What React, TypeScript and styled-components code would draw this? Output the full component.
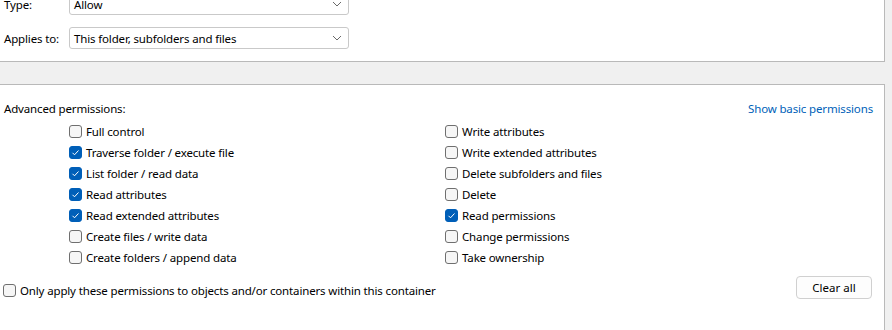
import React from 'react';
import styled, { createGlobalStyle } from 'styled-components';

const GlobalStyle = createGlobalStyle`
  *, *::before, *::after {
    box-sizing: border-box;
  }
  html, body {
    margin: 0;
    padding: 0;
    background: #f0f0f0;
  }
  body {
    font-family: 'Segoe UI', 'Noto Sans', sans-serif;
    font-size: 11.5px;
    letter-spacing: -0.15px;
    color: #000;
  }
`;

const Window = styled.div`
  width: 892px;
  height: 330px;
  overflow: hidden;
  background: #f0f0f0;
  display: flex;
  flex-direction: column;
  gap: 22px;
`;

const TopPanel = styled.section`
  width: 885px;
  background: #fff;
  border-right: 1px solid #b9b9b9;
  border-bottom: 1px solid #b9b9b9;
  padding: 0 0 12px 4px;
  display: flex;
  flex-direction: column;
  gap: 12px;
`;

const FieldRow = styled.div<{ $cut?: boolean }>`
  display: flex;
  align-items: center;
  height: 22px;
  margin-top: ${(p) => (p.$cut ? '-7px' : '0')};
`;

const FieldLabel = styled.label`
  width: 65px;
  flex: none;
`;

const Select = styled.div`
  width: 280px;
  height: 22px;
  border: 1px solid #c9c9c9;
  border-radius: 3px;
  background: #fff;
  display: flex;
  align-items: center;
  justify-content: space-between;
  padding: 0 6px 0 4px;
`;

const Chevron = () => (
  <svg width="10" height="6" viewBox="0 0 10 6">
    <path d="M1 1l4 4 4-4" fill="none" stroke="#6a6a6a" strokeWidth="1" />
  </svg>
);

const MainPanel = styled.section`
  flex: 1;
  width: 885px;
  background: #fff;
  border-top: 1px solid #b9b9b9;
  border-right: 1px solid #b9b9b9;
  padding: 13px 11px 0 4px;
  display: flex;
  flex-direction: column;
`;

const HeaderRow = styled.div`
  display: flex;
  justify-content: space-between;
  align-items: center;
  height: 20px;
`;

const Link = styled.a`
  color: #005fb8;
  text-decoration: none;
  cursor: pointer;
`;

const PermGrid = styled.div`
  display: grid;
  grid-template-columns: 376px 1fr;
  grid-auto-flow: column;
  grid-template-rows: repeat(7, 21px);
  padding-left: 65px;
  margin-top: 3px;
`;

const CheckLabel = styled.label`
  display: flex;
  align-items: center;
  gap: 4px;
  white-space: nowrap;
`;

const Box = styled.span<{ $on: boolean }>`
  width: 13px;
  height: 13px;
  flex: none;
  border-radius: 3px;
  border: 1px solid ${(p) => (p.$on ? '#005fb8' : '#6f6f6f')};
  background: ${(p) => (p.$on ? '#005fb8' : '#f6f6f6')};
  display: flex;
  align-items: center;
  justify-content: center;
`;

const Check = ({ on, children }: { on: boolean; children: React.ReactNode }) => (
  <CheckLabel>
    <Box $on={on}>
      {on && (
        <svg width="9" height="9" viewBox="0 0 9 9">
          <path d="M1.5 4.8l2 2 4-4.3" fill="none" stroke="#fff" strokeWidth="1" />
        </svg>
      )}
    </Box>
    {children}
  </CheckLabel>
);

const FooterRow = styled.div`
  display: flex;
  justify-content: space-between;
  align-items: flex-start;
  margin-top: 8px;
  margin-left: -1px;
  padding-right: 1px;
`;

const FooterCheck = styled.div`
  margin-top: 7px;
`;

const Button = styled.button`
  width: 76px;
  height: 23px;
  border: 1px solid #d0d0d0;
  border-radius: 4px;
  background: #fdfdfd;
  font: inherit;
  color: #000;
  padding: 0;
`;

const left: [string, boolean][] = [
  ['Full control', false],
  ['Traverse folder / execute file', true],
  ['List folder / read data', true],
  ['Read attributes', true],
  ['Read extended attributes', true],
  ['Create files / write data', false],
  ['Create folders / append data', false],
];

const right: [string, boolean][] = [
  ['Write attributes', false],
  ['Write extended attributes', false],
  ['Delete subfolders and files', false],
  ['Delete', false],
  ['Read permissions', true],
  ['Change permissions', false],
  ['Take ownership', false],
];

export default function App() {
  return (
    <>
      <GlobalStyle />
      <Window>
        <TopPanel>
          <FieldRow $cut>
            <FieldLabel>Type:</FieldLabel>
            <Select>
              <span>Allow</span>
              <Chevron />
            </Select>
          </FieldRow>
          <FieldRow>
            <FieldLabel>Applies to:</FieldLabel>
            <Select>
              <span>This folder, subfolders and files</span>
              <Chevron />
            </Select>
          </FieldRow>
        </TopPanel>
        <MainPanel>
          <HeaderRow>
            <span>Advanced permissions:</span>
            <Link>Show basic permissions</Link>
          </HeaderRow>
          <PermGrid>
            {[...left, ...right].map(([name, on]) => (
              <Check key={name} on={on}>
                {name}
              </Check>
            ))}
          </PermGrid>
          <FooterRow>
            <FooterCheck>
              <Check on={false}>
                Only apply these permissions to objects and/or containers within this container
              </Check>
            </FooterCheck>
            <Button>Clear all</Button>
          </FooterRow>
        </MainPanel>
      </Window>
    </>
  );
}
